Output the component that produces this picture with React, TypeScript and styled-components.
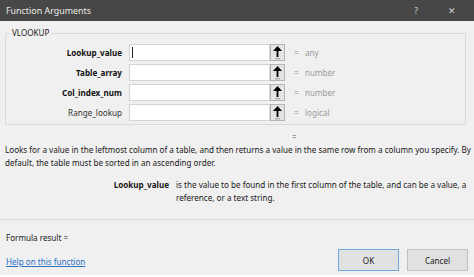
import { FC } from "react";
import styled, { createGlobalStyle } from "styled-components";

const GlobalStyle = createGlobalStyle`
  html, body {
    margin: 0;
    padding: 0;
    background: #ffffff;
  }
  body {
    font-family: "Noto Sans", "Open Sans", sans-serif;
    font-size: 8.1px;
    color: #1a1a1a;
  }
`;

const Dialog = styled.div`
  width: 474px;
  height: 275px;
  background: #f0f0f0;
  display: flex;
  flex-direction: column;
  box-sizing: border-box;
`;

const TitleBar = styled.div`
  height: 21px;
  background: #474747;
  color: #ececec;
  display: flex;
  align-items: center;
  padding-left: 6px;
  font-size: 8.9px;
`;

const Title = styled.div`
  flex: 1;
`;

const TitleButton = styled.div<{ $width: number }>`
  width: ${(p) => p.$width}px;
  text-align: center;
  color: #d0d0d0;
  font-size: 8.5px;
`;

const Group = styled.fieldset`
  margin: 6px 8px 0 5px;
  padding: 5px 0 3px 0;
  border: 1px solid #dadada;
  display: flex;
  flex-direction: column;
  gap: 3px;
`;

const Legend = styled.legend`
  margin-left: 4px;
  padding: 0 2px;
  line-height: 12px;
  color: #1a1a1a;
`;

const ArgRow = styled.div`
  display: flex;
  align-items: center;
  height: 17px;
`;

const ArgLabel = styled.div<{ $required: boolean }>`
  width: 116px;
  margin-right: 7px;
  text-align: right;
  font-weight: ${(p) => (p.$required ? 700 : 400)};
  color: ${(p) => (p.$required ? "#111" : "#333")};
`;

const InputBox = styled.div`
  position: relative;
  width: 141px;
  height: 17px;
  box-sizing: border-box;
  background: #ffffff;
  border: 1px solid #d4d4d4;
`;

const Caret = styled.div`
  position: absolute;
  left: 2px;
  top: 2px;
  width: 1px;
  height: 11px;
  background: #222;
`;

const RefButton = styled.div`
  width: 15px;
  height: 17px;
  box-sizing: border-box;
  background: #e4e4e4;
  border: 1px solid #b4b4b4;
  display: flex;
  align-items: center;
  justify-content: center;
`;

const Eq = styled.div`
  margin-left: 9px;
  width: 6px;
  color: #8a8a8a;
`;

const ArgValue = styled.div`
  margin-left: 5px;
  color: #9b9b9b;
`;

const ResultLine = styled.div`
  margin-top: 6px;
  padding-left: 292px;
  line-height: 12px;
  color: #555;
`;

const Description = styled.p`
  margin: 1px 3px 0 5px;
  line-height: 12.5px;
`;

const ArgHelp = styled.div`
  display: flex;
  margin-top: 10px;
  line-height: 12.5px;
`;

const ArgHelpName = styled.div`
  width: 176px;
  flex: none;
  padding-right: 7px;
  box-sizing: border-box;
  text-align: right;
  font-weight: 700;
`;

const ArgHelpText = styled.div`
  width: 296px;
`;

const Bottom = styled.div`
  margin-top: auto;
  border-top: 1px solid #dcdcdc;
  padding: 12px 6px 4px 6px;
`;

const FormulaResult = styled.div`
  line-height: 12px;
`;

const Footer = styled.div`
  display: flex;
  align-items: center;
  margin-top: 5px;
  height: 22px;
`;

const HelpLink = styled.a`
  flex: 1;
  padding-top: 3px;
  color: #2a6fc0;
  text-decoration: underline;
`;

const Button = styled.button<{ $primary?: boolean }>`
  width: 61px;
  height: 22px;
  margin-left: 8px;
  box-sizing: border-box;
  background: #e1e1e1;
  border: 1px solid ${(p) => (p.$primary ? "#6fa6e0" : "#c2c2c2")};
  font-family: inherit;
  font-size: 8.1px;
  color: #1a1a1a;
  padding: 0;
`;

const UpArrow: FC = () => (
  <svg width="11" height="15" viewBox="0 0 11 15">
    <path d="M5.5 1 L1 6 H4.6 V12 H6.4 V6 H10 Z" fill="#000" />
    <rect x="3" y="13.4" width="5" height="0.8" fill="#8c8c8c" />
  </svg>
);

const args = [
  { name: "Lookup_value", value: "any", required: true },
  { name: "Table_array", value: "number", required: true },
  { name: "Col_index_num", value: "number", required: true },
  { name: "Range_lookup", value: "logical", required: false },
];

export default function App() {
  return (
    <>
      <GlobalStyle />
      <Dialog>
        <TitleBar>
          <Title>Function Arguments</Title>
          <TitleButton $width={28}>?</TitleButton>
          <TitleButton $width={44}>✕</TitleButton>
        </TitleBar>

        <Group>
          <Legend>VLOOKUP</Legend>
          {args.map((a, i) => (
            <ArgRow key={a.name}>
              <ArgLabel $required={a.required}>{a.name}</ArgLabel>
              <InputBox>{i === 0 && <Caret />}</InputBox>
              <RefButton>
                <UpArrow />
              </RefButton>
              <Eq>=</Eq>
              <ArgValue>{a.value}</ArgValue>
            </ArgRow>
          ))}
        </Group>

        <ResultLine>=</ResultLine>

        <Description>
          Looks for a value in the leftmost column of a table, and then returns a value in the
          same row from a column you specify. By default, the table must be sorted in an
          ascending order.
        </Description>

        <ArgHelp>
          <ArgHelpName>Lookup_value</ArgHelpName>
          <ArgHelpText>
            is the value to be found in the first column of the table, and can be a value, a
            reference, or a text string.
          </ArgHelpText>
        </ArgHelp>

        <Bottom>
          <FormulaResult>Formula result =</FormulaResult>
          <Footer>
            <HelpLink href="#">Help on this function</HelpLink>
            <Button $primary>OK</Button>
            <Button>Cancel</Button>
          </Footer>
        </Bottom>
      </Dialog>
    </>
  );
}
